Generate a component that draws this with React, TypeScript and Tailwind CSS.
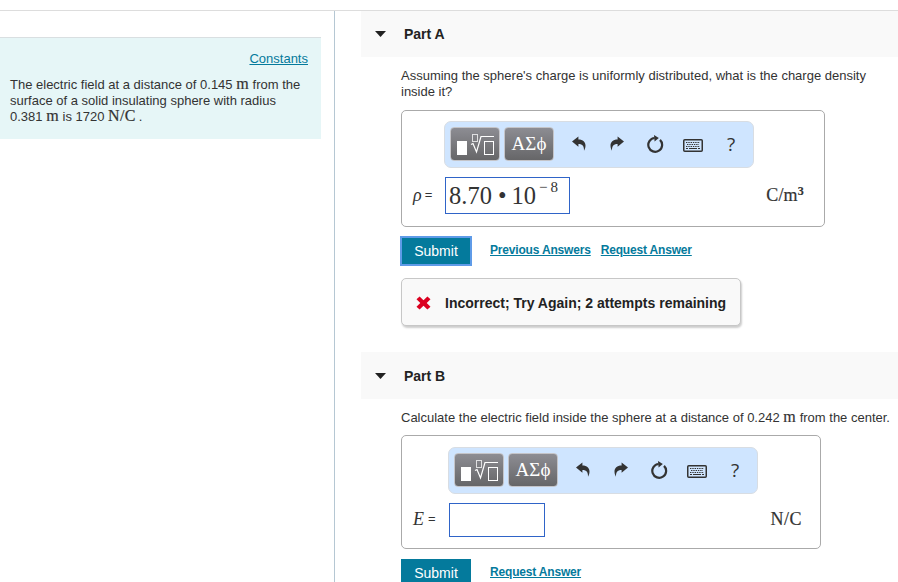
import { useState } from 'react'
import type { ReactNode } from 'react'

const SERIF = "font-['Liberation_Serif',serif]"

function UndoIcon({ flip = false }: { flip?: boolean }) {
  return (
    <svg width="14" height="16" viewBox="0 0 14 16" className={flip ? '-scale-x-100' : ''}>
      <path
        d="M0 5.6 L6.4 0.6 V3.4 C11 3.4 13.6 6 13.5 9.6 C13.5 11.6 12.9 13.4 12 14.8 C12.2 10.2 10.8 7.9 6.4 7.9 V10.8 Z"
        fill="#333"
      />
    </svg>
  )
}

function ResetIcon() {
  return (
    <svg width="18" height="18" viewBox="0 0 18 18" fill="none">
      <path d="M14 4.9 A6.9 6.9 0 1 1 8.6 3" stroke="#333" strokeWidth="2.2" />
      <path d="M8 0 L12.8 3 L8.6 6.4 Z" fill="#333" />
    </svg>
  )
}

function KeyboardIcon() {
  return (
    <svg width="20" height="13" viewBox="0 0 20 13">
      <rect x="0.75" y="0.75" width="18.5" height="11.5" rx="1" fill="none" stroke="#333" strokeWidth="1.5" />
      <path d="M3 3.5 H17 M4 5.5 H16" stroke="#333" strokeDasharray="1.4 0.9" />
      <path d="M3 7.5 H17" stroke="#333" strokeDasharray="1.4 0.9" />
      <path d="M3 9.5 H5 M6 9.5 H14 M15 9.5 H17" stroke="#333" />
    </svg>
  )
}

function TemplateIcon() {
  return (
    <svg width="39" height="21" viewBox="0 0 39 21" fill="none" stroke="#fff">
      <rect x="1" y="7" width="10" height="14" fill="#fff" stroke="none" />
      <rect x="16.5" y="0.5" width="5" height="7" strokeOpacity="0.75" />
      <path d="M15 10.5 L17 9.5 L20.5 18 L25 2.5 H38" strokeWidth="1.2" />
      <rect x="28.5" y="7.5" width="9" height="13" />
    </svg>
  )
}

function Toolbar() {
  const key =
    'flex h-[34px] w-[50px] items-center justify-center rounded-[4px] border border-[#c4c4c8] bg-linear-to-b from-[#8d8d93] to-[#666668]'
  return (
    <div className="flex h-[47px] w-[310px] items-center rounded-[7px] border border-[#d8dde3] bg-[#cfe5ff] pb-px pl-[5px]">
      <button className={`${key} pl-px`}><TemplateIcon /></button>
      <button className={`${key} ml-1 pb-[2px] text-white`}>
        <span className={`${SERIF} text-[19px] leading-none`}>ΑΣϕ</span>
      </button>
      <button className="ml-[17px] flex w-4 justify-center"><UndoIcon /></button>
      <button className="ml-[22px] flex w-4 justify-center"><UndoIcon flip /></button>
      <button className="ml-[21px]"><ResetIcon /></button>
      <button className="ml-[19px] mt-[3px]"><KeyboardIcon /></button>
      <button className="ml-[24px] font-['Open_Sans',sans-serif] text-[19px] leading-none text-[#333]">?</button>
    </div>
  )
}

function PartHeader({ title, open, onToggle }: { title: string; open: boolean; onToggle: () => void }) {
  return (
    <button onClick={onToggle} className="flex h-full w-full items-center bg-[#f9f9f9] pl-[14px]">
      <svg width="11" height="6" viewBox="0 0 11 6" className={open ? '' : '-rotate-90'}>
        <path d="M0 0 H11 L5.5 6 Z" fill="#222" />
      </svg>
      <span className="ml-[18px] text-[14px] font-bold text-[#222]">{title}</span>
    </button>
  )
}

function Part({ title, headerHeight, children }: { title: string; headerHeight: string; children: ReactNode }) {
  const [open, setOpen] = useState(true)
  return (
    <section>
      <div className={headerHeight}>
        <PartHeader title={title} open={open} onToggle={() => setOpen(!open)} />
      </div>
      {open && <div className="pl-10">{children}</div>}
    </section>
  )
}

// Upright serif unit set inside a sans-serif sentence
function Unit({ children }: { children: ReactNode }) {
  return <span className={`${SERIF} inline-block h-[14px] text-[16px] leading-[14px] tracking-[0.3px] [-webkit-text-stroke:0.2px_#333]`}>{children}</span>
}

function Link({ children }: { children: ReactNode }) {
  return <a href="#" className="text-[12px] font-bold tracking-[-0.18px] text-[#047a9c] underline">{children}</a>
}

export default function App() {
  return (
    <div className="h-[582px] w-[898px] overflow-hidden bg-white pt-[10px] font-['Liberation_Sans',Arial,sans-serif] text-[13px] leading-4 text-[#333]">
      <div className="flex h-[572px] border-t border-[#ddd]">
        <aside className="w-[335px] shrink-0 border-r border-[#b5c7d3] pt-[26px]">
          <div className="h-[102px] w-[321px] border-t border-[#d9dfe1] bg-[#e6f6f7] pl-[10px] pr-[13px] pt-[13px]">
            <div className="text-right">
              <a href="#" className="text-[#047a9c] underline">Constants</a>
            </div>
            <p className="mt-[10px] whitespace-nowrap">
              The electric field at a distance of 0.145 <Unit>m</Unit> from the<br />
              surface of a solid insulating sphere with radius<br />
              0.381 <Unit>m</Unit> is 1720 <Unit>N/C</Unit><span className="ml-[3px]">.</span>
            </p>
          </div>
        </aside>

        <main className="ml-[26px] w-[537px] shrink-0">
          <Part title="Part A" headerHeight="h-[46px]">
            <p className="mt-[11px] whitespace-nowrap">
              Assuming the sphere's charge is uniformly distributed, what is the charge density<br />
              inside it?
            </p>
            <div className="mt-[10px] h-[117px] w-[424px] rounded-[5px] border border-[#aaa] pl-[11px] pt-[10px]">
              <div className="pl-[31px]"><Toolbar /></div>
              <div className="mt-[9px] flex items-center">
                <div className="flex w-[32px] shrink-0 items-center pb-[2px]">
                  <span className={`${SERIF} text-[18px] italic`}>ρ</span>
                  <span className="ml-[3px]">=</span>
                </div>
                <div className={`${SERIF} flex h-[37px] w-[125px] shrink-0 items-center whitespace-nowrap border border-[#2f64c8] pl-[3px] pt-[2px] text-[24.5px] leading-none`}>
                  <span>8.70</span>
                  <span className="ml-[6px]">•</span>
                  <span className="ml-[5px]">10</span>
                  <span className="mb-[18px] ml-[3px] text-[15px]">−</span>
                  <span className="mb-[18px] ml-[3px] text-[15px]">8</span>
                </div>
                <div className={`${SERIF} ml-auto mr-[20px] text-[18px] tracking-[0.2px] [-webkit-text-stroke:0.2px_#333]`}>
                  C/m<span className="relative -top-[6px] text-[12px] font-bold">3</span>
                </div>
              </div>
            </div>
            <div className="mt-[10px] flex items-center">
              <button className="h-[28px] w-[70px] bg-[#047a9c] text-[14px] text-white outline-2 -outline-offset-1 outline-[#5f9be8]">Submit</button>
              <div className="ml-[19px] flex gap-[10px] pb-[2px]">
                <Link>Previous Answers</Link>
                <Link>Request Answer</Link>
              </div>
            </div>
            <div className="mt-[13px] flex h-[48px] w-[340px] items-center rounded-[5px] border border-[#c7c7c7] bg-[#f9f9f9] pl-[14px] pt-px shadow-[1px_2px_2px_rgba(0,0,0,0.2)]">
              <svg width="15" height="14" viewBox="0 0 15 14">
                <path d="M3.6 0.5 L7.5 4.2 L11.4 0.5 L14.5 3.3 L10.7 7 L14.5 10.7 L11.4 13.5 L7.5 9.8 L3.6 13.5 L0.5 10.7 L4.3 7 L0.5 3.3 Z" fill="#db0020" />
              </svg>
              <span className="ml-[14px] whitespace-nowrap text-[14px] font-bold text-[#222]">Incorrect; Try Again; 2 attempts remaining</span>
            </div>
          </Part>

          <div className="h-[26px]" />

          <Part title="Part B" headerHeight="h-[47px]">
            <p className="mt-[11px] h-4 whitespace-nowrap">
              Calculate the electric field inside the sphere at a distance of 0.242 <Unit>m</Unit> from the center.
            </p>
            <div className="mt-[9px] h-[114px] w-[420px] rounded-[5px] border border-[#aaa] pl-[11px] pt-[11px]">
              <div className="pl-[35px]"><Toolbar /></div>
              <div className="mt-[9px] flex items-center">
                <div className="flex w-[36px] shrink-0 items-center pb-[2px]">
                  <span className={`${SERIF} text-[18px] italic`}>E</span>
                  <span className="ml-[4px]">=</span>
                </div>
                <input className={`${SERIF} h-[34px] w-[96px] shrink-0 border border-[#2f64c8] px-[3px] text-[25px] outline-none`} />
                <div className={`${SERIF} ml-auto mr-[18px] pb-[2px] text-[18px] tracking-[0.5px] [-webkit-text-stroke:0.2px_#333]`}>N/C</div>
              </div>
            </div>
            <div className="mt-[10px] flex items-center">
              <button className="h-[28px] w-[70px] bg-[#047a9c] text-[14px] text-white">Submit</button>
              <div className="ml-[19px] flex pb-[2px]">
                <Link>Request Answer</Link>
              </div>
            </div>
          </Part>
        </main>
      </div>
    </div>
  )
}
